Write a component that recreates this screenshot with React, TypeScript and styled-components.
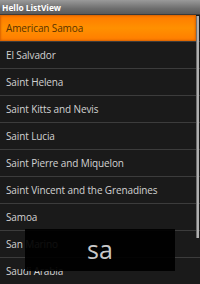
import React from 'react'
import styled, { createGlobalStyle } from 'styled-components'

const GlobalStyle = createGlobalStyle`
  html, body {
    margin: 0;
    padding: 0;
    background: #1b1b1b;
  }
  body {
    font-family: 'Open Sans', 'DejaVu Sans', sans-serif;
  }
`

const Screen = styled.div`
  position: relative;
  width: 200px;
  height: 284px;
  overflow: hidden;
  background: #1a1a1a;
  display: flex;
  flex-direction: column;
`

const TitleBar = styled.div`
  height: 15px;
  flex: 0 0 15px;
  box-sizing: border-box;
  padding-left: 2px;
  display: flex;
  align-items: center;
  background: linear-gradient(#9a9a9a, #6e6e6e 60%, #5a5a5a);
  border-bottom: 1px solid #3a3a3a;
  color: #ffffff;
  font-size: 8.4px;
  font-weight: 700;
`

const List = styled.div`
  position: relative;
  flex: 1;
  display: flex;
  flex-direction: column;
`

const Row = styled.div<{ $selected?: boolean }>`
  height: 26px;
  flex: 0 0 26px;
  box-sizing: border-box;
  display: flex;
  align-items: center;
  padding-left: 6px;
  margin-right: ${({ $selected }) => ($selected ? '4px' : '0')};
  font-size: 10px;
  letter-spacing: -0.12px;
  color: ${({ $selected }) => ($selected ? '#5a3200' : '#d2d2d2')};
  background: ${({ $selected }) =>
    $selected ? 'linear-gradient(#ff7a00, #ff9000 50%, #ff7c00)' : 'transparent'};
  box-shadow: ${({ $selected }) => ($selected ? 'inset 0 0 2px 1px #d86200' : 'none')};
  white-space: nowrap;
`

const Divider = styled.div`
  height: 1px;
  flex: 0 0 1px;
  background: #3c3c3c;
`

const ScrollThumb = styled.div`
  position: absolute;
  right: 1px;
  top: 1px;
  width: 2px;
  height: 222px;
  background: #b0b0b0;
  border-left: 1px solid #707070;
`

const FastScrollOverlay = styled.div`
  position: absolute;
  left: 25px;
  top: 229px;
  width: 150px;
  height: 42px;
  background: rgba(0, 0, 0, 0.93);
  display: flex;
  align-items: center;
  justify-content: center;
  color: #c8c8c8;
  font-size: 25px;
  padding-bottom: 2px;
  box-sizing: border-box;
`

const countries = [
  'American Samoa',
  'El Salvador',
  'Saint Helena',
  'Saint Kitts and Nevis',
  'Saint Lucia',
  'Saint Pierre and Miquelon',
  'Saint Vincent and the Grenadines',
  'Samoa',
  'San Marino',
  'Saudi Arabia',
]

export default function App() {
  return (
    <>
      <GlobalStyle />
      <Screen>
        <TitleBar>Hello ListView</TitleBar>
        <List>
          {countries.map((name, i) => (
            <React.Fragment key={name}>
              <Row $selected={i === 0}>{name}</Row>
              <Divider />
            </React.Fragment>
          ))}
          <ScrollThumb />
        </List>
        <FastScrollOverlay>sa</FastScrollOverlay>
      </Screen>
    </>
  )
}
